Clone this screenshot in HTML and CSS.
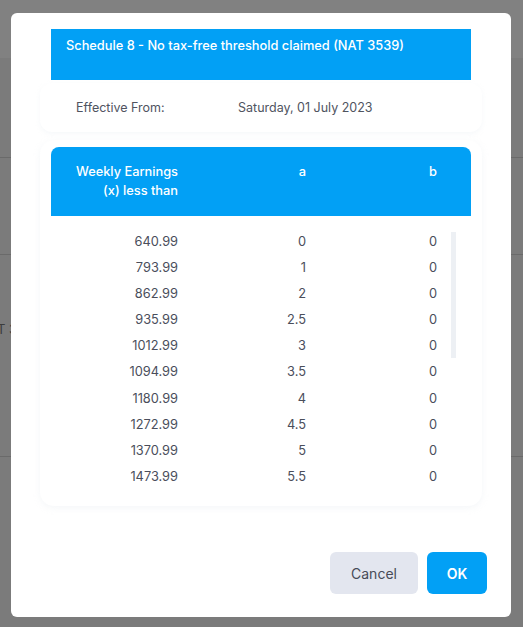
FILE: index.html
```html
<!DOCTYPE html>
<html>
<head>
<meta charset="utf-8">
<link rel="stylesheet" href="styles.css">
</head>
<body>
<div class="app">
  <div class="app-top"></div>
  <div class="app-row r1"></div>
  <div class="app-row r2"></div>
  <div class="app-row r3"><span class="frag">T 3</span></div>
</div>

<div class="nav nav-left">
  <svg width="16" height="20" viewBox="0 0 16 20"><polyline points="12,2 4,10 12,18" fill="none" stroke="#151515" stroke-width="4.2" stroke-linejoin="miter"/></svg>
</div>
<div class="nav nav-right">
  <svg width="16" height="20" viewBox="0 0 16 20"><polyline points="4,2 12,10 4,18" fill="none" stroke="#6f6f6f" stroke-width="4.2" stroke-linejoin="miter"/></svg>
</div>

<div class="modal">
  <div class="content">
    <div class="title">Schedule 8 - No tax-free threshold claimed (NAT 3539)</div>
    <div class="effective">
      <span class="eff-label">Effective From:</span>
      <span class="eff-value">Saturday, 01 July 2023</span>
    </div>
    <div class="table-card">
      <div class="thead">
        <div class="c1">Weekly Earnings<br>(x) less than</div>
        <div class="c2">a</div>
        <div class="c3">b</div>
      </div>
      <div class="tbody">
        <div class="scroll-thumb"></div>
        <div class="tr"><div class="c1">640.99</div><div class="c2">0</div><div class="c3">0</div></div>
        <div class="tr"><div class="c1">793.99</div><div class="c2">1</div><div class="c3">0</div></div>
        <div class="tr"><div class="c1">862.99</div><div class="c2">2</div><div class="c3">0</div></div>
        <div class="tr"><div class="c1">935.99</div><div class="c2">2.5</div><div class="c3">0</div></div>
        <div class="tr"><div class="c1">1012.99</div><div class="c2">3</div><div class="c3">0</div></div>
        <div class="tr"><div class="c1">1094.99</div><div class="c2">3.5</div><div class="c3">0</div></div>
        <div class="tr"><div class="c1">1180.99</div><div class="c2">4</div><div class="c3">0</div></div>
        <div class="tr"><div class="c1">1272.99</div><div class="c2">4.5</div><div class="c3">0</div></div>
        <div class="tr"><div class="c1">1370.99</div><div class="c2">5</div><div class="c3">0</div></div>
        <div class="tr"><div class="c1">1473.99</div><div class="c2">5.5</div><div class="c3">0</div></div>
      </div>
    </div>
  </div>
  <div class="actions">
    <button class="btn btn-cancel">Cancel</button>
    <button class="btn btn-ok">OK</button>
  </div>
</div>
</body>
</html>
```

FILE: styles.css
```css
* { box-sizing: border-box; }
html, body { margin: 0; padding: 0; }
body {
  width: 523px;
  height: 627px;
  overflow: hidden;
  background: #7b7b7b;
  font-family: Inter, "Noto Sans", sans-serif;
  position: relative;
}
.app-top { height: 58px; background: #818181; }
.app-row { border-bottom: 1px solid #6a6a6a; position: relative; }
.r1 { height: 100px; }
.r2 { height: 97px; }
.r3 { height: 202px; }
.frag {
  position: absolute;
  left: -3px;
  top: 66px;
  font-size: 13px;
  color: #3c3c3c;
}

.nav { position: absolute; top: 269px; }
.nav-left { left: 13px; }
.nav-right { left: 493px; }
.nav svg { display: block; }

.modal {
  position: absolute;
  left: 11px;
  top: 13px;
  width: 500px;
  height: 604px;
  background: #ffffff;
  border-radius: 6px;
  display: flex;
  flex-direction: column;
}
.content {
  padding: 16px 40px 0 40px;
  flex: 1;
}
.title {
  height: 51px;
  background: #02a0f5;
  color: #ffffff;
  font-size: 12.8px;
  font-weight: 500;
  padding: 9px 0 0 15px;
  line-height: 16px;
}
.effective {
  margin: 3px -11px 0 -11px;
  height: 49px;
  border-radius: 12px;
  box-shadow: 0 2px 5px rgba(215, 225, 232, 0.22);
  display: flex;
  align-items: center;
  padding-left: 36px;
  font-size: 12.5px;
  color: #50545f;
}
.eff-label { width: 162px; }

.table-card {
  margin: 8px -11px 0 -11px;
  padding: 7px 11px 0 11px;
  height: 366px;
  border-radius: 14px;
  box-shadow: 0 2px 6px rgba(215, 225, 232, 0.25);
}
.thead {
  height: 69px;
  background: #02a0f5;
  border-radius: 8px 8px 0 0;
  color: #ffffff;
  font-size: 12.8px;
  font-weight: 500;
  line-height: 19px;
  display: flex;
  padding-top: 15px;
}
.c1 { width: 127px; text-align: right; }
.c2 { width: 128px; text-align: right; }
.c3 { width: 131px; text-align: right; }
.tbody {
  position: relative;
  padding-top: 17px;
}
.tr {
  display: flex;
  height: 26.1px;
  line-height: 18px;
  font-size: 12.8px;
  color: #4a4e5b;
}
.scroll-thumb {
  position: absolute;
  left: 400px;
  top: 16px;
  width: 5px;
  height: 126px;
  background: #edf0f4;
}

.actions {
  display: flex;
  justify-content: flex-end;
  gap: 9px;
  padding: 0 24px 23px 0;
}
.btn {
  height: 42px;
  border: none;
  border-radius: 6px;
  font-family: Inter, "Noto Sans", sans-serif;
  font-size: 14px;
  cursor: pointer;
}
.btn-cancel {
  width: 88px;
  background: #e3e6ef;
  color: #474b57;
}
.btn-ok {
  width: 60px;
  background: #02a0f5;
  color: #ffffff;
  font-weight: 600;
}
```
